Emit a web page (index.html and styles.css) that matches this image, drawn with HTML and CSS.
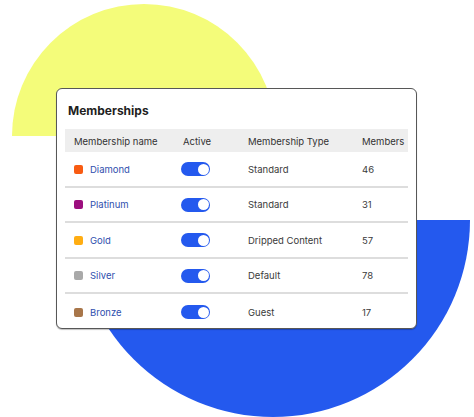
FILE: index.html
```html
<!DOCTYPE html>
<html lang="en">
<head>
<meta charset="utf-8">
<title>Memberships</title>
<link rel="stylesheet" href="styles.css">
</head>
<body>
<div class="stage">
  <div class="blob blob-yellow"></div>
  <div class="blob blob-blue"></div>
  <section class="card">
    <h2 class="card-title">Memberships</h2>
    <div class="table">
      <div class="row head">
        <div class="cell">Membership name</div>
        <div class="cell">Active</div>
        <div class="cell">Membership Type</div>
        <div class="cell">Members</div>
      </div>
      <div class="row">
        <div class="cell name"><span class="swatch diamond"></span>Diamond</div>
        <div class="cell"><span class="toggle"></span></div>
        <div class="cell">Standard</div>
        <div class="cell">46</div>
      </div>
      <div class="row">
        <div class="cell name"><span class="swatch platinum"></span>Platinum</div>
        <div class="cell"><span class="toggle"></span></div>
        <div class="cell">Standard</div>
        <div class="cell">31</div>
      </div>
      <div class="row">
        <div class="cell name"><span class="swatch gold"></span>Gold</div>
        <div class="cell"><span class="toggle"></span></div>
        <div class="cell">Dripped Content</div>
        <div class="cell">57</div>
      </div>
      <div class="row">
        <div class="cell name"><span class="swatch silver"></span>Silver</div>
        <div class="cell"><span class="toggle"></span></div>
        <div class="cell">Default</div>
        <div class="cell">78</div>
      </div>
      <div class="row last">
        <div class="cell name"><span class="swatch bronze"></span>Bronze</div>
        <div class="cell"><span class="toggle"></span></div>
        <div class="cell">Guest</div>
        <div class="cell">17</div>
      </div>
    </div>
  </section>
</div>
</body>
</html>
```

FILE: styles.css
```css
* { box-sizing: border-box; }
html, body {
  margin: 0;
  padding: 0;
  background: #ffffff;
}
body {
  font-family: "Inter", "Liberation Sans", sans-serif;
  color: #3a3a3a;
}
.stage {
  position: relative;
  width: 474px;
  height: 417px;
  overflow: hidden;
  padding: 88px 0 0 56px;
}
.blob {
  position: absolute;
  border-radius: 50%;
}
.blob-yellow {
  left: 12px;
  top: 4px;
  width: 264px;
  height: 132px;
  border-radius: 132px 132px 0 0;
  background: #f4fc7a;
}
.blob-blue {
  left: 76px;
  top: 220px;
  width: 394px;
  height: 197px;
  border-radius: 0 0 197px 197px;
  background: #2459ee;
}
.card {
  position: relative;
  width: 361px;
  height: 241px;
  background: #ffffff;
  border: 1px solid #575757;
  border-radius: 6px;
  padding: 12px 8px 0 8px;
  box-shadow: 0 1px 1px rgba(0,0,0,0.25);
}
.card-title {
  margin: 0 0 8px 3px;
  font-size: 12px;
  line-height: 20px;
  font-weight: 700;
  color: #1f1f1f;
}
.table {
  display: flex;
  flex-direction: column;
  font-size: 9.5px;
}
.row {
  display: grid;
  grid-template-columns: 109px 65px 114px 1fr;
  align-items: center;
  height: 35.5px;
  padding-top: 1px;
  border-bottom: 2px solid #dddddd;
}
.row.head {
  height: 23px;
  padding-top: 1px;
  background: #eeeeee;
  border-bottom: none;
  color: #333333;
}
.row.last {
  border-bottom: none;
}
.cell {
  padding-left: 9px;
  white-space: nowrap;
}
.cell.name {
  display: flex;
  align-items: center;
  gap: 7px;
  color: #2f50ae;
}
.swatch {
  width: 9px;
  height: 9px;
  border-radius: 2px;
}
.diamond { background: #f85b12; }
.platinum { background: #9c0e7e; }
.gold { background: #ffad12; }
.silver { background: #a9a9a9; }
.bronze { background: #a8764a; }
.toggle {
  display: block;
  position: relative;
  width: 29px;
  height: 14px;
  margin-left: -2px;
  border-radius: 7px;
  background: #2459ee;
}
.toggle::after {
  content: "";
  position: absolute;
  right: 1.5px;
  top: 1.5px;
  width: 11px;
  height: 11px;
  border-radius: 50%;
  background: #ffffff;
}
```
